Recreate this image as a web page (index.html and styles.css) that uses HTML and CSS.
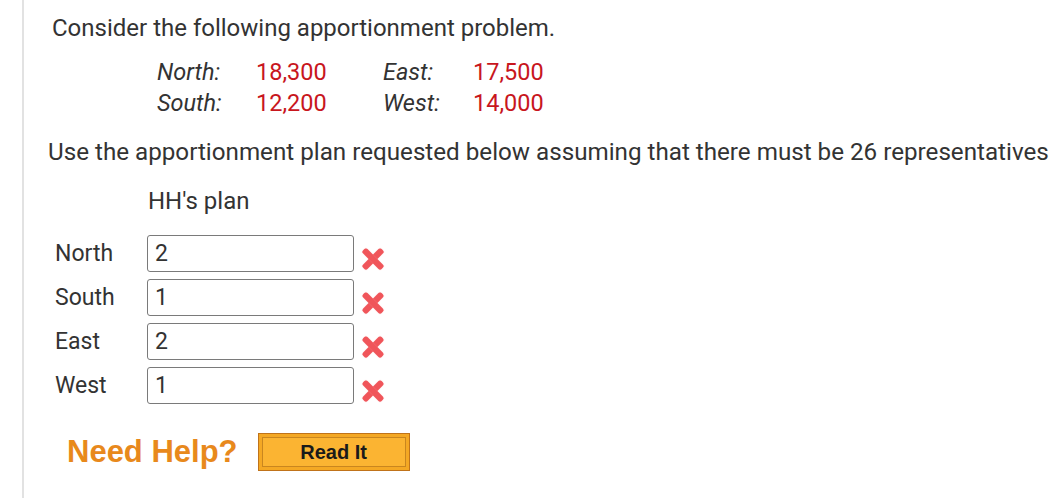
FILE: index.html
```html
<!DOCTYPE html>
<html>
<head>
<meta charset="utf-8">
<link rel="stylesheet" href="styles.css">
</head>
<body>
<div class="page">
  <p class="intro">Consider the following apportionment problem.</p>
  <div class="data">
    <span class="lbl">North:</span><span class="val">18,300</span>
    <span class="lbl">East:</span><span class="val">17,500</span>
    <span class="lbl">South:</span><span class="val">12,200</span>
    <span class="lbl">West:</span><span class="val">14,000</span>
  </div>
  <p class="task">Use the apportionment plan requested below assuming that there must be 26 representatives</p>
  <p class="plan">HH's plan</p>
  <div class="answers">
    <div class="row"><span class="state">North</span><span class="box">2</span><span class="x"></span></div>
    <div class="row"><span class="state">South</span><span class="box">1</span><span class="x"></span></div>
    <div class="row"><span class="state">East</span><span class="box">2</span><span class="x"></span></div>
    <div class="row"><span class="state">West</span><span class="box">1</span><span class="x"></span></div>
  </div>
  <div class="help">
    <span class="need">Need Help?</span>
    <span class="read"><span class="read-inner">Read It</span></span>
  </div>
</div>
</body>
</html>
```

FILE: styles.css
```css
html, body {
  margin: 0;
  padding: 0;
  background: #fff;
}
body {
  font-family: Roboto, "Noto Sans", sans-serif;
  color: #333;
  width: 1050px;
  height: 498px;
  overflow: hidden;
}
.page {
  margin-left: 22px;
  border-left: 2px solid #e2e2e2;
  height: 498px;
  padding-left: 28px;
  box-sizing: border-box;
  padding-top: 13px;
}
.intro {
  margin: 0;
  font-size: 24px;
  line-height: 30px;
  padding-left: 0;
}
.data {
  display: grid;
  grid-template-columns: 99px 127px 90px auto;
  grid-auto-rows: 31px;
  margin-left: 105px;
  margin-top: 14px;
  font-size: 23.5px;
  line-height: 31px;
}
.lbl {
  font-style: italic;
  color: #333;
}
.val {
  color: #c8161d;
}
.task {
  margin: 18px 0 0 -4px;
  font-size: 24.2px;
  line-height: 30px;
  white-space: nowrap;
}
.plan {
  margin: 19px 0 0 96px;
  font-size: 24px;
  line-height: 30px;
}
.answers {
  margin-top: 19px;
  display: flex;
  flex-direction: column;
  gap: 7px;
}
.row {
  display: flex;
  align-items: center;
  height: 37px;
}
.state {
  width: 92px;
  flex: none;
  padding-left: 3px;
  font-size: 23px;
}
.box {
  flex: none;
  height: 35px;
  border: 1px solid #7a7a7a;
  border-radius: 3px;
  font-size: 23px;
  line-height: 35px;
  padding-left: 7px;
  box-sizing: content-box;
  width: 198px;
}
.x {
  position: relative;
  flex: none;
  width: 24px;
  height: 24px;
  margin-left: 7px;
  margin-top: 10px;
}
.x::before, .x::after {
  content: "";
  position: absolute;
  left: 9px;
  top: -1px;
  width: 6px;
  height: 26px;
  background: #f0555a;
  border-radius: 2px;
  box-shadow: 0 0 1px #f4898c;
  transform: rotate(45deg);
}
.x::after {
  transform: rotate(-45deg);
}
.help {
  margin-top: 29px;
  display: flex;
  align-items: center;
  margin-left: 15px;
}
.need {
  font-family: "Liberation Sans", Arial, sans-serif;
  font-weight: bold;
  font-size: 31px;
  color: #e8891c;
}
.read {
  margin-left: 20px;
  width: 152px;
  height: 38px;
  box-sizing: border-box;
  background: #f4a824;
  border: 1px solid #c0731a;
  padding: 3px;
  display: flex;
}
.read-inner {
  flex: 1;
  border: 1px solid #c9861f;
  background: #fbb432;
  display: flex;
  align-items: center;
  justify-content: center;
  font-family: "Liberation Sans", Arial, sans-serif;
  font-weight: bold;
  font-size: 20px;
  color: #1a1a1a;
}
```
